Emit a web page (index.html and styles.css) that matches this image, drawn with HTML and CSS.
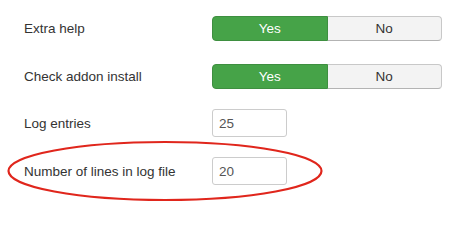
FILE: index.html
```html
<!DOCTYPE html>
<html>
<head>
<meta charset="utf-8">
<link rel="stylesheet" href="styles.css">
</head>
<body>
<div class="form">
  <div class="row row-toggle">
    <div class="label">Extra help</div>
    <div class="btn-group">
      <span class="btn btn-yes">Yes</span>
      <span class="btn btn-no">No</span>
    </div>
  </div>
  <div class="row row-toggle">
    <div class="label">Check addon install</div>
    <div class="btn-group">
      <span class="btn btn-yes">Yes</span>
      <span class="btn btn-no">No</span>
    </div>
  </div>
  <div class="row">
    <div class="label">Log entries</div>
    <div class="input">25</div>
  </div>
  <div class="row">
    <div class="label">Number of lines in log file</div>
    <div class="input">20</div>
  </div>
  <svg class="mark" width="474" height="208" viewBox="0 0 474 208">
    <ellipse cx="165" cy="171" rx="156.5" ry="29" fill="none" stroke="#e0261c" stroke-width="2.2"/>
  </svg>
</div>
</body>
</html>
```
FILE: styles.css
```css
html, body {
  margin: 0;
  padding: 0;
  background: #ffffff;
}
body {
  font-family: "Liberation Sans", Arial, sans-serif;
  font-size: 13.5px;
  color: #333333;
}
.form {
  position: relative;
  width: 474px;
  height: 208px;
  box-sizing: border-box;
  padding: 13px 0 0 24px;
  display: flex;
  flex-direction: column;
  gap: 20px;
}
.row {
  display: flex;
  align-items: center;
  height: 28px;
}
.row-toggle {
  height: 25px;
  padding-top: 3px;
}
.label {
  width: 188px;
  line-height: 18px;
  padding-top: 1px;
}
.btn-group {
  display: flex;
  height: 25px;
  width: 230px;
}
.btn {
  flex: 1;
  box-sizing: border-box;
  display: flex;
  align-items: center;
  justify-content: center;
}
.btn-yes {
  background: #46a348;
  color: #ffffff;
  border: 1px solid #3e8f40;
  border-radius: 4px 0 0 4px;
}
.btn-no {
  background: #f3f3f3;
  color: #333333;
  border: 1px solid #c8c8c8;
  border-bottom-color: #b3b3b3;
  border-left: none;
  border-radius: 0 4px 4px 0;
}
.input {
  box-sizing: border-box;
  width: 75px;
  height: 28px;
  border: 1px solid #cccccc;
  border-radius: 3px;
  padding-left: 6px;
  display: flex;
  align-items: center;
  color: #555555;
}
.mark {
  position: absolute;
  left: 0;
  top: 0;
  pointer-events: none;
}
```
